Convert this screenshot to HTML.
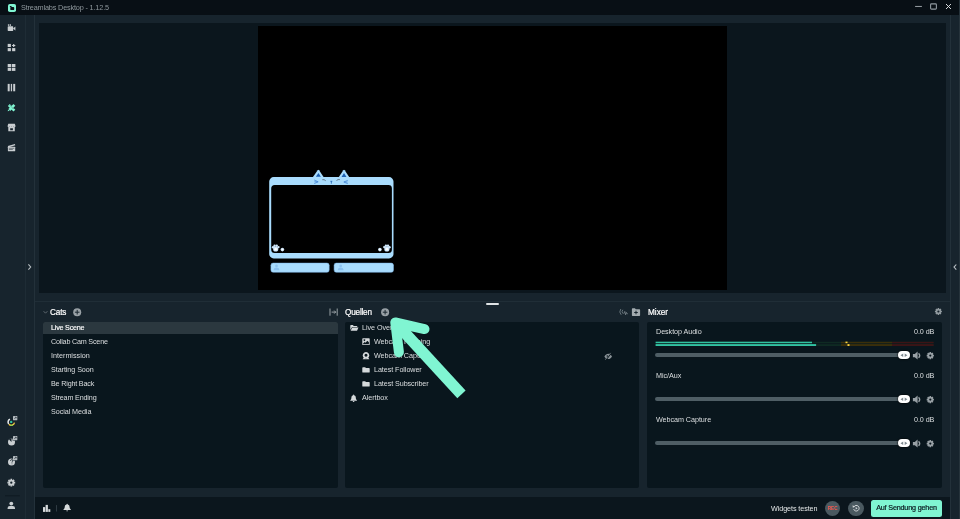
<!DOCTYPE html>
<html lang="de">
<head>
<meta charset="utf-8">
<title>Streamlabs Desktop - 1.12.5</title>
<style>
*{box-sizing:border-box;margin:0;padding:0}
html,body{width:960px;height:519px;overflow:hidden;background:#17242d;font-family:"Liberation Sans",sans-serif;color:#d5d8da}
.abs{position:absolute}
svg{position:absolute;overflow:visible}
#app{position:relative;width:960px;height:519px;overflow:hidden;background:#17242d}
#titlebar{left:0;top:0;width:960px;height:15px;background:#080f15}
.t{left:21px;top:1px;height:14px;line-height:14px;font-size:7.3px;letter-spacing:-0.17px;color:#8e979c;white-space:nowrap}
#sidebar{left:0;top:15px;width:26px;height:504px;background:#17242d;border-right:1px solid #1e2c35}
#lstrip{left:26px;top:15px;width:9px;height:504px;background:#17242d;border-right:1px solid #23313a}
#rstrip{left:950px;top:15px;width:10px;height:504px;background:#17242d;border-left:1px solid #23313a}
#preview{left:39px;top:22.900px;width:907px;height:269.700px;background:#0b161d}
#canvas{left:258px;top:25.600px;width:469px;height:264.300px;background:#000}
#hline{left:35px;top:301px;width:915px;height:1px;background:#202e37}
#handle{left:486px;top:302.800px;width:12.800px;height:2.200px;background:#dfe3e5;border-radius:1px}
.panel{top:322.3px;height:166px;background:#09161d;border-radius:2px}
.ptitle{top:306.7px;height:12px;line-height:12px;font-size:8.2px;color:#fff;white-space:nowrap;-webkit-text-stroke:0.2px #fff}
.row{left:0;height:12px;line-height:12px;font-size:7.2px;color:#dcdfe1;white-space:nowrap}
.sel{color:#fff;-webkit-text-stroke:0.15px #fff}
#footer{left:35px;top:496.800px;width:915px;height:23px;background:#0b161d}
.ft{white-space:nowrap}
.row,.ptitle,.t,.ft{will-change:transform}
.track{height:4px;border-radius:2px;background:#4f5e65;left:8px;width:250px}
.knob{width:12.2px;height:8px;border-radius:4px;background:#fff;left:250.800px;box-shadow:0 0 1.500px 0.500px rgba(0,0,0,.8)}
</style>
</head>
<body>
<div id="app">
  <div id="titlebar" class="abs">
    <svg style="left:8px;top:3.5px" width="8" height="8" viewBox="0 0 8 8"><rect width="8" height="8" rx="1.8" fill="#80f5d2"/><rect x="2.3" y="3" width="3.9" height="3.1" rx=".9" fill="#0a1219"/><rect x="1.8" y="2" width="1.8" height="1.3" rx=".5" fill="#0a1219"/></svg>
    <div class="abs t">Streamlabs Desktop - 1.12.5</div>
    <svg style="left:900px;top:0" width="60" height="15" viewBox="0 0 60 15" fill="none"><path d="M15.100 6.450h6.800" stroke="#b4bbbf" stroke-width=".85"/><rect x="30.600" y="3.900" width="5.800" height="5.200" rx=".9" stroke="#9099a0" stroke-width="1.100"/><path d="M46 4l5 5M51 4l-5 5" stroke="#dfe3e5" stroke-width=".95"/></svg>
  </div>

  <div id="sidebar" class="abs"></div>
  <div id="lstrip" class="abs"></div>
  <div id="rstrip" class="abs"></div>


  <!-- sidebar icons -->
  <svg style="left:0;top:0" width="36" height="519" viewBox="0 0 36 519" fill="#c9ced1">
    <!-- editor / camera -->
    <rect x="7.700" y="26.300" width="5.500" height="4.600" rx=".6"/>
    <path d="M13 28.600L15.400 26.600V30.600Z"/>
    <rect x="7.900" y="24.300" width="1.300" height="1.500"/><rect x="9.700" y="24.300" width="1.300" height="1.500"/>
    <!-- grid plus -->
    <rect x="7.700" y="43.900" width="3.200" height="3.100"/><rect x="7.700" y="48.100" width="3.200" height="3.100"/><rect x="12.100" y="48.100" width="3.200" height="3.100"/>
    <path d="M13.100 43.900h1.200v1h1v1.100h-1v1h-1.200v-1h-1v-1.100h1z"/>
    <!-- grid -->
    <rect x="7.700" y="64" width="3.500" height="3.100"/><rect x="11.900" y="64" width="3.500" height="3.100"/><rect x="7.700" y="67.800" width="3.500" height="3.100"/><rect x="11.900" y="67.800" width="3.500" height="3.100"/>
    <!-- columns -->
    <rect x="7.700" y="83.900" width="2" height="7.400"/><rect x="10.800" y="83.900" width="1.300" height="7.400"/><rect x="13.200" y="83.900" width="2" height="7.400"/>
    <!-- themes (pencil ruler) -->
    <g fill="none" stroke="#80f5d2" stroke-width="2.600">
      <path d="M8.800 105L14.400 110.600"/>
      <path d="M14.400 104.900L9.300 110"/>
    </g>
    <path d="M7.700 111.200l.4-1.800 1.400 1.400z" fill="#80f5d2"/>
    <g stroke="#17242d" stroke-width=".6"><path d="M10 105.400l.8.800M11.300 106.700l.8.800M12.600 108l.8.800"/></g>
    <!-- store -->
    <path d="M8.300 123.800h6.500l.8 2.400a1.100 1.100 0 0 1-2.050.3a1.100 1.100 0 0 1-2 0a1.100 1.100 0 0 1-2 0a1.100 1.100 0 0 1-2.050-.3z"/>
    <path d="M8.300 127.100h6.500v4.100h-6.500z M10.200 128.300v2h2.700v-2z" fill-rule="evenodd"/>
    <!-- clapper -->
    <rect x="7.900" y="146.800" width="7.300" height="4.400" rx=".5"/>
    <path d="M7.800 146.100l7.100-2.100.4 1.300-7.100 2.100z"/>
    <g stroke="#17242d" stroke-width=".5"><path d="M8.800 148.300h5.500M8.800 149.500h4"/></g>

    <!-- bottom: dashboard icons -->
    <g>
      <path d="M8.700 424a3.300 3.300 0 0 1 1.200-4.900" fill="none" stroke="#e8ecee" stroke-width="1.500"/>
      <path d="M8.900 424.300a3.300 3.300 0 0 0 5.600-1.600" fill="none" stroke="#f5c842" stroke-width="1.300"/>
      <path d="M10.200 425.300a3.300 3.300 0 0 0 2.500-.2" fill="none" stroke="#8bd450" stroke-width="1.200"/>
      <circle cx="11.200" cy="421.900" r="1.200" fill="#31c3a2"/>
      <rect x="13" y="416" width="4.300" height="4.300" rx=".5" fill="#b5bcc0"/>
      <path d="M14.300 419l1.800-1.800M14.900 417.100h1.300v1.300" fill="none" stroke="#17242d" stroke-width=".6"/>
    </g>
    <g>
      <circle cx="11.500" cy="441.900" r="3.500"/>
      <path d="M11.500 441.900L9 439.500A3.500 3.500 0 0 1 11.500 438.300Z" fill="#17242d"/>
      <rect x="12.600" y="435.600" width="5" height="5" fill="#17242d"/>
      <rect x="13" y="436" width="4.300" height="4.300" rx=".5" fill="#b5bcc0"/>
      <path d="M14.300 439l1.800-1.800M14.900 437.100h1.300v1.300" fill="none" stroke="#17242d" stroke-width=".6"/>
    </g>
    <g>
      <circle cx="11.500" cy="461.900" r="3.500"/>
      <path d="M10.500 460.800a1.100 1.100 0 1 1 1.500 1v.8M12 463.600v.6" fill="none" stroke="#17242d" stroke-width=".8"/>
      <rect x="12.600" y="455.600" width="5" height="5" fill="#17242d"/>
      <rect x="13" y="456" width="4.300" height="4.300" rx=".5" fill="#b5bcc0"/>
      <path d="M14.300 459l1.800-1.800M14.900 457.100h1.300v1.300" fill="none" stroke="#17242d" stroke-width=".6"/>
    </g>
    <!-- gear -->
    <g transform="translate(11.300 482.700)">
      <circle r="2.100" fill="none" stroke="#c9ced1" stroke-width="1.900"/>
      <g stroke="#c9ced1" stroke-width="1.700"><path d="M0 -3.900V-2.500M0 3.900V2.500M-3.900 0H-2.500M3.900 0H2.500M-2.760 -2.760L-1.800 -1.800M2.760 2.760L1.800 1.800M-2.760 2.760L-1.800 1.800M2.760 -2.760L1.800 -1.800"/></g>
    </g>
    <rect x="5" y="495.300" width="14.800" height="1" fill="#0f1a21"/>
    <!-- user -->
    <circle cx="11.300" cy="503.600" r="1.900"/>
    <path d="M7.600 509v-.9a2.200 2.200 0 0 1 2.200-2.200h3a2.200 2.200 0 0 1 2.200 2.200v.9z"/>
    <!-- collapse arrow -->
    <path d="M28.400 264.400l2.300 2.600-2.300 2.600" fill="none" stroke="#b8bfc3" stroke-width="1.100"/>
  </svg>
  <svg style="left:950px;top:255px" width="10" height="24" viewBox="0 0 10 24"><path d="M6.300 9.500l-2.300 2.600 2.300 2.600" fill="none" stroke="#b8bfc3" stroke-width="1.100"/></svg>

  <div class="abs" style="left:959.300px;top:0;width:.7px;height:519px;background:#26333b"></div>
  <div id="preview" class="abs"></div>
  <div id="canvas" class="abs"></div>


  <!-- cat overlay -->
  <svg style="left:258px;top:160px" width="150" height="120" viewBox="258 160 150 120">
    <path d="M312.600 177.600L317.700 170.200a.9.900 0 0 1 1.400 0L323.900 177.600Z" fill="#a9dcfd"/>
    <path d="M338.500 177.600L343.300 170.300a.9.900 0 0 1 1.400 0L349.500 177.600Z" fill="#a9dcfd"/>
    <path d="M269.200 181.600a4.500 4.500 0 0 1 4.500-4.500h115.300a4.500 4.500 0 0 1 4.500 4.500v72.300a4.500 4.500 0 0 1-4.500 4.500h-115.300a4.500 4.500 0 0 1-4.500-4.500z M271.200 188.500v61.100a3.500 3.500 0 0 0 3.500 3.500h113.700a3.500 3.500 0 0 0 3.500-3.500v-61.100a3.500 3.500 0 0 0-3.500-3.500h-113.700a3.500 3.500 0 0 0-3.500 3.500z" fill="#a9dcfd" fill-rule="evenodd"/>
    <path d="M315.900 176.800L318.400 172.900L320.900 176.800Z" fill="#1d5fb0"/>
    <path d="M341.500 176.900L344 173.100L346.500 176.900Z" fill="#1d5fb0"/>
    <g fill="none" stroke="#3f82d6" stroke-width=".7"><path d="M314.200 180l4 1.800-4 1.800M314.400 181.800h3.400"/><path d="M347.800 180.300l-4 1.700 4 1.700M347.600 182h-3.400"/></g>
    <path d="M322.300 179.700q1.900-.5 3.400 1" fill="none" stroke="#56626f" stroke-width=".8"/>
    <path d="M336.500 180.500q1.500-1.400 3.400-.9" fill="none" stroke="#56626f" stroke-width=".8"/>
    <path d="M330.400 181.300h1.900M331.350 181.300v2.400" fill="none" stroke="#1d5fb0" stroke-width=".8"/>
    <!-- paws -->
    <g fill="#cfe7fb">
      <circle cx="275.700" cy="249" r="2.600"/><circle cx="273.100" cy="247.300" r="1.200"/><circle cx="274.600" cy="245.800" r="1.200"/><circle cx="276.700" cy="245.700" r="1.200"/><circle cx="278.400" cy="247.100" r="1.200"/>
      <circle cx="282.400" cy="249.600" r="1.800"/>
      <circle cx="386.900" cy="249" r="2.600"/><circle cx="384.300" cy="247.100" r="1.200"/><circle cx="385.900" cy="245.700" r="1.200"/><circle cx="388" cy="245.800" r="1.200"/><circle cx="389.500" cy="247.300" r="1.200"/>
      <circle cx="379.900" cy="249.600" r="1.800"/>
    </g>
    <circle cx="275.700" cy="249.200" r="1.300" fill="#fff"/><circle cx="386.900" cy="249.200" r="1.300" fill="#fff"/><circle cx="282.400" cy="249.600" r=".9" fill="#fff"/><circle cx="379.900" cy="249.600" r=".9" fill="#fff"/>
    <!-- label bars -->
    <rect x="270.900" y="263.100" width="58.300" height="9.200" rx="2.200" fill="#a9dcfd" stroke="#7fb7ea" stroke-width=".5"/>
    <rect x="334.100" y="263.100" width="59.400" height="9.200" rx="2.200" fill="#a9dcfd" stroke="#7fb7ea" stroke-width=".5"/>
    <g fill="#8cc2f0"><circle cx="276.500" cy="265.900" r="1.300"/><path d="M273.600 270.300a2.900 2.900 0 0 1 5.800 0z"/><circle cx="340.700" cy="265.900" r="1.300"/><path d="M337.800 270.300a2.900 2.900 0 0 1 5.800 0z"/></g>
  </svg>

  <div id="hline" class="abs"></div>
  <div id="handle" class="abs"></div>

  <!-- Scenes -->
  <div class="abs ptitle" style="left:50px;letter-spacing:-0.15px">Cats</div>
  <div class="abs panel" id="scenes" style="left:43px;width:295px">
    <div class="abs" style="left:0;top:0;width:295px;height:12px;background:#2b383f;border-radius:2px 2px 0 0"></div>
    <div class="abs row sel" style="left:8px;top:0;letter-spacing:-0.22px">Live Scene</div>
    <div class="abs row" style="left:8px;top:14px;letter-spacing:-0.2px">Collab Cam Scene</div>
    <div class="abs row" style="left:8px;top:28px;letter-spacing:0.0px">Intermission</div>
    <div class="abs row" style="left:8px;top:42px;letter-spacing:-0.07px">Starting Soon</div>
    <div class="abs row" style="left:8px;top:56px;letter-spacing:-0.19px">Be Right Back</div>
    <div class="abs row" style="left:8px;top:70px;letter-spacing:-0.16px">Stream Ending</div>
    <div class="abs row" style="left:8px;top:84px;letter-spacing:-0.07px">Social Media</div>
  </div>

  <!-- Sources -->
  <div class="abs ptitle" style="left:345px;letter-spacing:-0.2px">Quellen</div>
  <div class="abs panel" id="sources" style="left:345px;width:294px">
    <div class="abs row" style="left:16.500px;top:0;letter-spacing:-0.05px">Live Overlay</div>
    <div class="abs row" style="left:28.500px;top:14px;letter-spacing:-0.03px">Webcam Framing</div>
    <div class="abs row" style="left:28.500px;top:28px;letter-spacing:-0.05px">Webcam Capture</div>
    <div class="abs row" style="left:28.500px;top:42px;letter-spacing:-0.07px">Latest Follower</div>
    <div class="abs row" style="left:28.500px;top:56px;letter-spacing:-0.08px">Latest Subscriber</div>
    <div class="abs row" style="left:16.500px;top:70px;letter-spacing:-0.08px">Alertbox</div>
  </div>

  <!-- Mixer -->
  <div class="abs ptitle" style="left:647.500px;letter-spacing:0.0px">Mixer</div>
  <div class="abs panel" id="mixer" style="left:647px;width:295px">
    <div class="abs row" style="left:8.500px;top:3.500px;letter-spacing:-0.06px">Desktop Audio</div>
    <div class="abs row" style="right:8px;left:auto;top:3.500px;letter-spacing:-0.08px">0.0 dB</div>
    <div class="abs row" style="left:8.500px;top:47.500px;letter-spacing:-0.03px">Mic/Aux</div>
    <div class="abs row" style="right:8px;left:auto;top:47.500px;letter-spacing:-0.08px">0.0 dB</div>
    <div class="abs row" style="left:8.500px;top:91.500px;letter-spacing:-0.05px">Webcam Capture</div>
    <div class="abs row" style="right:8px;left:auto;top:91.500px;letter-spacing:-0.08px">0.0 dB</div>
    <div class="abs track" style="top:30.800px"></div><div class="abs knob" style="top:28.700px"></div>
    <div class="abs track" style="top:74.800px"></div><div class="abs knob" style="top:72.700px"></div>
    <div class="abs track" style="top:118.800px"></div><div class="abs knob" style="top:116.700px"></div>
  </div>

  <div id="footer" class="abs"></div>
  <div class="abs ft" style="left:771px;top:502.600px;height:12px;line-height:12px;font-size:7.200px;color:#e4e7e8;letter-spacing:-0.08px">Widgets testen</div>
  <div class="abs" style="left:825.100px;top:500.700px;width:15.300px;height:15.300px;border-radius:50%;background:#4a5960"></div>
  <div class="abs ft" style="left:825.100px;top:500.900px;width:15.300px;height:15.300px;line-height:15.300px;text-align:center;font-size:4.700px;font-weight:bold;color:#fa5a50;letter-spacing:0">REC</div>
  <div class="abs" style="left:848.300px;top:500.700px;width:15.300px;height:15.300px;border-radius:50%;background:#4a5960"></div>
  <div class="abs" style="left:871px;top:500.200px;width:71px;height:16.500px;border-radius:2.500px;background:#80f5d2"></div>
  <div class="abs ft" style="left:871px;top:500.300px;width:71px;height:16.500px;line-height:16.500px;text-align:center;font-size:7.200px;color:#09161d;-webkit-text-stroke:0.2px #09161d;letter-spacing:-0.17px">Auf Sendung gehen</div>


  <!-- header icons -->
  <svg style="left:0;top:300px" width="960" height="24" viewBox="0 300 960 24">
    <path d="M43.600 311.200l1.900 2 1.900-2" fill="none" stroke="#6f7a80" stroke-width=".8"/>
    <circle cx="77.200" cy="312.200" r="4" fill="#99a1a6"/><path d="M74.900 312.200h4.600M77.200 309.900v4.600" stroke="#1b2830" stroke-width="1"/>
    <g fill="none" stroke="#aab2b6" stroke-width=".9"><path d="M330 308.500v7.200M337.200 308.500v7.200M331.600 312.100h4M334.200 310.600l1.500 1.500-1.500 1.500"/></g>
    <circle cx="385.100" cy="312.200" r="4" fill="#99a1a6"/><path d="M382.800 312.200h4.600M385.100 309.900v4.600" stroke="#1b2830" stroke-width="1"/>
    <!-- audio filter icon (dim) -->
    <g fill="none" stroke="#66737a" stroke-width="1"><path d="M620.800 309a4.500 4.500 0 0 0 .4 5.800"/><path d="M622.800 309.800a2.800 2.800 0 0 0 .3 3.900"/></g>
    <path d="M623.800 313.600l1-2.200.8 3.400.8-2.400.7 1.400h.6" fill="none" stroke="#7d888e" stroke-width=".8"/>
    <!-- folder plus -->
    <path d="M631.900 308.900a.7.700 0 0 1 .7-.7h2.300l.9 1h3.600a.7.700 0 0 1 .7.700v5.300a.7.700 0 0 1-.7.700h-6.800a.7.700 0 0 1-.7-.7z" fill="#a3abaf"/>
    <path d="M634.200 312.500h3.600M636 310.700v3.600" stroke="#17242d" stroke-width="1"/>
    <!-- mixer gear -->
    <g transform="translate(938.400 311.500)">
      <circle r="1.900" fill="none" stroke="#929ba0" stroke-width="1.700"/>
      <g stroke="#929ba0" stroke-width="1.500"><path d="M0 -3.500V-2.300M0 3.500V2.300M-3.500 0H-2.300M3.500 0H2.300M-2.480 -2.480L-1.600 -1.600M2.480 2.480L1.600 1.600M-2.480 2.480L-1.600 1.600M2.480 -2.480L1.600 -1.600"/></g>
    </g>
  </svg>

  <!-- source icons -->
  <svg style="left:345px;top:322px" width="294" height="166" viewBox="345 322 294 166" fill="#d5d9db">
    <!-- folder open -->
    <path d="M350.300 325.700a.6.600 0 0 1 .6-.6h2l.8.800h3a.6.600 0 0 1 .6.600v.6h-5.200l-1.800 3z"/>
    <path d="M352.300 327.600h6.200l-1.500 3.100h-6.400z"/>
    <!-- image -->
    <path d="M362.300 338.900a.7.700 0 0 1 .7-.7h6a.7.700 0 0 1 .7.700v5.500a.7.700 0 0 1-.7.700h-6a.7.700 0 0 1-.7-.7z M363.100 344.200h5.800v-1.900l-1.500-1.500-2 2-.8-.8-1.500 1.500z M364.400 339.200a.9.900 0 1 0 .01 0z" fill-rule="evenodd"/>
    <!-- webcam -->
    <path d="M366 352a3.300 3.300 0 1 0 .01 0z M366 353.800a1.500 1.500 0 1 1-.01 0z" fill-rule="evenodd"/>
    <path d="M362.600 359.200l1.200-1.600a3.800 3.800 0 0 0 4.400 0l1.200 1.600z"/>
    <!-- folders -->
    <path d="M362.300 367.900a.7.700 0 0 1 .7-.7h2.100l.9.900h3a.7.700 0 0 1 .7.700v3.100a.7.700 0 0 1-.7.700h-6a.7.700 0 0 1-.7-.7z"/>
    <path d="M362.300 381.900a.7.700 0 0 1 .7-.7h2.100l.9.900h3a.7.700 0 0 1 .7.700v3.100a.7.700 0 0 1-.7.700h-6a.7.700 0 0 1-.7-.7z"/>
    <!-- bell -->
    <path d="M353.600 394.500a.5.500 0 0 1 .5.500v.3a2.200 2.200 0 0 1 1.700 2.200c0 1.600.5 2.200 1.100 2.700v.5h-6.600v-.5c.6-.5 1.100-1.100 1.100-2.700a2.200 2.200 0 0 1 1.700-2.200v-.3a.5.500 0 0 1 .5-.5z M352.700 401a.9.900 0 0 0 1.800 0z"/>
    <!-- hidden eye -->
    <path d="M604.400 356.400c1.100-1.900 2.400-2.700 3.800-2.700s2.700.8 3.800 2.700c-1.100 1.900-2.400 2.700-3.800 2.700s-2.700-.8-3.800-2.700z" fill="#8a9398"/>
    <path d="M606.300 359.400l4.800-6.200" stroke="#09161d" stroke-width="1.300" fill="none"/>
    <path d="M605.300 359.700l5.300-6.800" stroke="#8a9398" stroke-width=".8" fill="none"/>
    <circle cx="607.300" cy="356" r=".8" fill="#09161d"/>
  </svg>

  <!-- mixer widgets -->
  <svg style="left:647px;top:322px" width="295" height="166" viewBox="647 322 295 166">
    <rect x="655.600" y="341.800" width="278" height="1.500" fill="#0f2a23"/>
    <rect x="655.600" y="344.100" width="278" height="1.900" fill="#0f2a23"/>
    <rect x="841" y="341.800" width="51" height="1.500" fill="#3a2f0b"/><rect x="841" y="344.100" width="51" height="1.900" fill="#3a2f0b"/>
    <rect x="892" y="341.800" width="41.600" height="1.500" fill="#3b1416"/><rect x="892" y="344.100" width="41.600" height="1.900" fill="#3b1416"/>
    <rect x="655.600" y="341.700" width="156.400" height="1.500" fill="#31c3a2"/>
    <rect x="655.600" y="344.100" width="160.500" height="1.900" fill="#31c3a2"/>
    <rect x="845.500" y="341.600" width="2" height="1.600" fill="#f5d142"/><rect x="847.500" y="344.100" width="2" height="1.900" fill="#f5d142"/>
    <g id="ctl">
      <path d="M900.500 355.200l2.700-1.700v3.400zM907.400 355.200l-2.700-1.700v3.400z" fill="#7f8a90"/>
      <path d="M912.900 353.900h1.900l2.800-2.300v8l-2.800-2.300h-1.900z" fill="#98a0a5"/>
      <path d="M918.600 353.300a3.300 3.300 0 0 1 0 4.600" fill="none" stroke="#98a0a5" stroke-width="1.300"/>
      <g transform="translate(930.300 355.600)">
        <circle r="1.950" fill="none" stroke="#98a0a5" stroke-width="1.800"/>
        <g stroke="#98a0a5" stroke-width="1.600"><path d="M0 -3.600V-2.300M0 3.600V2.300M-3.600 0H-2.300M3.600 0H2.300M-2.550 -2.550L-1.600 -1.600M2.550 2.550L1.600 1.600M-2.550 2.550L-1.600 1.600M2.550 -2.550L1.600 -1.600"/></g>
      </g>
    </g>
    <use href="#ctl" y="44"/>
    <use href="#ctl" y="88"/>
  </svg>

  <!-- footer icons -->
  <svg style="left:35px;top:497px" width="915" height="22" viewBox="35 497 915 22">
    <rect x="43" y="507.100" width="2.200" height="4.800" fill="#d5d9db"/><rect x="45.600" y="504.900" width="2.300" height="7" fill="#d5d9db"/><rect x="48.300" y="509.200" width="2" height="2.700" fill="#d5d9db"/>
    <rect x="56.100" y="505.100" width=".8" height="6.400" fill="#38454c"/>
    <path d="M67.150 503.800a.55.550 0 0 1 .55.550v.25a2.500 2.500 0 0 1 1.900 2.500c0 1.400.6 1.900 1.300 2.400v.4h-7.500v-.4c.7-.5 1.300-1 1.300-2.400a2.500 2.500 0 0 1 1.900-2.500v-.25a.55.550 0 0 1 .55-.55z M66.250 510.400a.9.900 0 0 0 1.800 0z" fill="#d5d9db"/>
    <g fill="none" stroke="#d5d9db" stroke-width="1"><path d="M853.900 506.800A2.800 2.800 0 1 1 853.670 509.160"/></g>
    <path d="M852.600 505.200l.2 2.500 2.300-.9z" fill="#d5d9db"/>
    <path d="M855.700 507v2.400l1.900-1.200z" fill="#d5d9db"/>
  </svg>

  <!-- arrow -->
  <svg style="left:0;top:0" width="960" height="519" viewBox="0 0 960 519" fill="none" stroke="#80f5d2">
    <path d="M424.500 329.100L395.300 322.500L398.900 352.200" stroke-width="10" stroke-linecap="round" stroke-linejoin="round"/>
    <path d="M398.700 326.100L461.450 394.350" stroke-width="11.200" stroke-linecap="butt"/>
  </svg>
</div>
</body>
</html>
